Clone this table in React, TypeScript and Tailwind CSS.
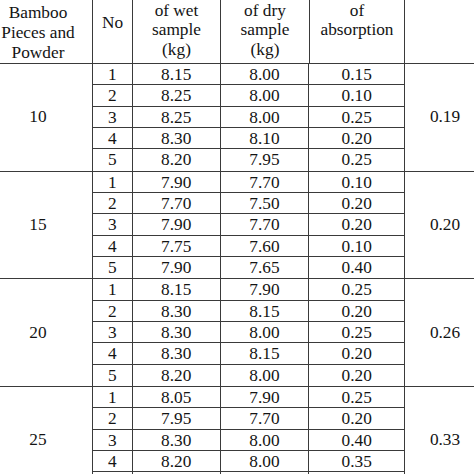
import React from "react";

type Group = { label: string; avg: string; rows: string[][] };

const groups: Group[] = [
  {
    label: "10",
    avg: "0.19",
    rows: [
      ["1", "8.15", "8.00", "0.15"],
      ["2", "8.25", "8.00", "0.10"],
      ["3", "8.25", "8.00", "0.25"],
      ["4", "8.30", "8.10", "0.20"],
      ["5", "8.20", "7.95", "0.25"],
    ],
  },
  {
    label: "15",
    avg: "0.20",
    rows: [
      ["1", "7.90", "7.70", "0.10"],
      ["2", "7.70", "7.50", "0.20"],
      ["3", "7.90", "7.70", "0.20"],
      ["4", "7.75", "7.60", "0.10"],
      ["5", "7.90", "7.65", "0.40"],
    ],
  },
  {
    label: "20",
    avg: "0.26",
    rows: [
      ["1", "8.15", "7.90", "0.25"],
      ["2", "8.30", "8.15", "0.20"],
      ["3", "8.30", "8.00", "0.25"],
      ["4", "8.30", "8.15", "0.20"],
      ["5", "8.20", "8.00", "0.20"],
    ],
  },
  {
    label: "25",
    avg: "0.33",
    rows: [
      ["1", "8.05", "7.90", "0.25"],
      ["2", "7.95", "7.70", "0.20"],
      ["3", "8.30", "8.00", "0.40"],
      ["4", "8.20", "8.00", "0.35"],
      ["5", "8.15", "7.85", "0.30"],
    ],
  },
];

const line = "border-[#3a3a3a]";

export default function App() {
  return (
    <div className="w-[474px] h-[474px] overflow-hidden bg-white text-[#141414] text-[17.3px] font-['Liberation_Serif','Times_New_Roman',serif]">
      <div className="ml-[-16px] w-[501px] flex flex-col">
        {/* Header */}
        <div className={"flex h-[64px] border-b text-center " + line}>
          <div className={"w-[109px] border-r pt-[2.5px] leading-[20px] " + line}>
            <div>Bamboo</div>
            <div>Pieces and</div>
            <div>Powder</div>
          </div>
          <div className={"w-[40px] border-r pt-[12.5px] leading-[20px] " + line}>No</div>
          <div className={"w-[88px] border-r leading-[19.5px] " + line}>
            <div className="mt-[-19px]">Weight</div>
            <div>of wet</div>
            <div>sample</div>
            <div>(kg)</div>
          </div>
          <div className={"w-[89px] border-r leading-[19.5px] " + line}>
            <div className="mt-[-19px]">Weight</div>
            <div>of dry</div>
            <div>sample</div>
            <div>(kg)</div>
          </div>
          <div className={"w-[95px] border-r leading-[19.5px] " + line}>
            <div className="mt-[-19px]">Percentage</div>
            <div>of</div>
            <div>absorption</div>
          </div>
          <div className="w-[80px] leading-[19.5px]">
            <div className="mt-[-19px]">Average</div>
          </div>
        </div>

        {/* Body */}
        {groups.map((g) => (
          <div key={g.label} className={"flex border-b " + line}>
            <div className={"w-[109px] border-r flex items-center justify-center " + line}>
              {g.label}
            </div>
            <div className={"w-[312px] flex flex-col border-r " + line}>
              {g.rows.map((r, i) => (
                <div
                  key={i}
                  className={
                    "flex h-[21.33px] leading-[21px] text-center " +
                    (i < 4 ? "border-b border-[#3a3a3a]" : "")
                  }
                >
                  <div className={"w-[40px] border-r " + line}>{r[0]}</div>
                  <div className={"w-[88px] border-r " + line}>{r[1]}</div>
                  <div className={"w-[89px] border-r " + line}>{r[2]}</div>
                  <div className="w-[95px]">{r[3]}</div>
                </div>
              ))}
            </div>
            <div className="w-[80px] flex items-center justify-center">{g.avg}</div>
          </div>
        ))}
      </div>
    </div>
  );
}
